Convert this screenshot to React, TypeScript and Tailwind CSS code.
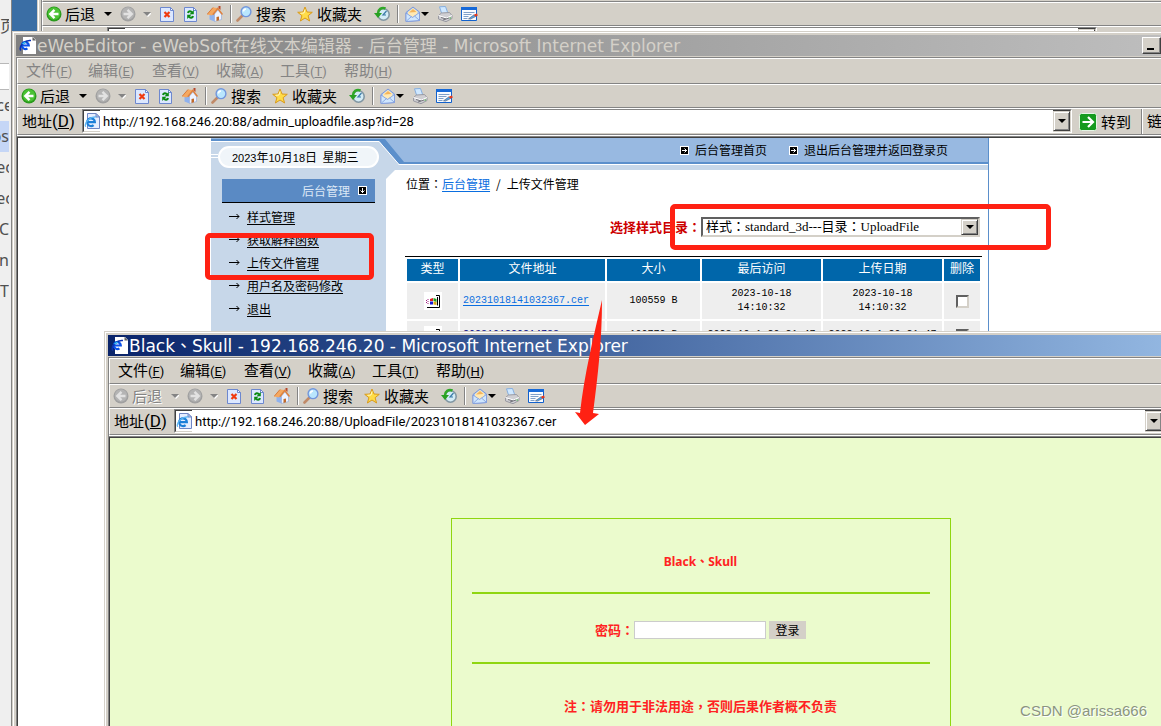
import { useId, type ReactNode } from "react";
import clsx from "clsx";

const menus = [
  { label: "文件", key: "F" },
  { label: "编辑", key: "E" },
  { label: "查看", key: "V" },
  { label: "收藏", key: "A" },
  { label: "工具", key: "T" },
  { label: "帮助", key: "H" },
];

const sideLinks = ["样式管理", "获取解释函数", "上传文件管理", "用户名及密码修改", "退出"];

const files = [
  {
    name: "20231018141032367.cer",
    size: "100559 B",
    visited: ["2023-10-18", "14:10:32"],
    uploaded: ["2023-10-18", "14:10:32"],
  },
  {
    name: "2023101820214733",
    size: "100770 B",
    visited: ["2023-10-1 20:21:47"],
    uploaded: ["2023-10-1 20:21:47"],
  },
];

// full-width punctuation, centred in its cell
function Mark({ children }: { children: ReactNode }) {
  return <span className="font-['Noto_Sans_CJK_TC',sans-serif]">{children}</span>;
}

function PageIcon() {
  return (
    <svg className="h-4 w-4 shrink-0" viewBox="0 0 16 16" aria-hidden="true">
      <path d="M3.500.5h8.500l3.500 3.500v11.500h-12z" fill="#e6eeff" stroke="#6f86c4" />
      <path d="M12 .5v3.500h3.500z" fill="#b9c8ea" stroke="#6f86c4" />
      <path d="M3.200 9.200h7.700a3.900 3.900 0 1 0-1.300 2.900" fill="none" stroke="#1c7fd8" strokeWidth="2.200" />
      <path d="M1.800 13.800C-.5 10 6 3.500 12.500 4" fill="none" stroke="#5ab4f2" strokeWidth="1.200" />
    </svg>
  );
}

function TitleIcon() {
  return (
    <svg className="h-[17px] w-[17px] shrink-0" viewBox="0 0 17 17" aria-hidden="true">
      <path d="M4 0h10l3 3v14H4z" fill="#fff" />
      <path d="M13.500 0v3.500H17z" fill="#606060" />
      <path d="M3 8.500h6.800a3.500 3.500 0 1 0-1.400 2.900" fill="none" stroke="#0a50e8" strokeWidth="2.200" />
      <path d="M1.800 13.500C-.5 9.500 6 2.500 12 3.500" fill="none" stroke="#0a30b0" strokeWidth="1.500" />
      <path d="M3.500 7l3-2" stroke="#38d0f8" strokeWidth="1.500" />
    </svg>
  );
}

function RoundArrow({ back, active }: { back?: boolean; active?: boolean }) {
  return (
    <svg className="h-4 w-4 shrink-0" viewBox="0 0 16 16" aria-hidden="true">
      <circle cx="8" cy="8" r="7.500" fill={active ? "#2a9a1c" : "#a0a0a0"} />
      <circle cx="8" cy="7.500" r="6.200" fill={active ? "#4cc234" : "#b4b4b4"} />
      <path
        d={back ? "M12.500 8H4.500M8.500 3.800L4.300 8l4.200 4.200" : "M3.500 8h8M7.500 3.800L11.700 8l-4.200 4.200"}
        fill="none"
        stroke={active ? "#fff" : "#e2e2e2"}
        strokeWidth="2.400"
      />
    </svg>
  );
}

function Caret({ muted }: { muted?: boolean }) {
  return (
    <svg className="h-2 w-2 shrink-0" viewBox="0 0 8 8" aria-hidden="true">
      {muted && <path d="M1 3h8L5 7z" fill="#fff" />}
      <path d="M0 2h8L4 6z" fill={muted ? "#848484" : "#000"} />
    </svg>
  );
}

function StopIcon() {
  return (
    <svg className="h-4 w-4" viewBox="0 0 16 16" aria-hidden="true">
      <path d="M1.500 1.500h10l3 3v11h-13z" fill="#dce8ff" stroke="#6d88cf" />
      <path d="M11.500 1.500v3h3z" fill="#fff" stroke="#6d88cf" />
      <path d="M5.500 6l5 5M10.500 6l-5 5" stroke="#f03a10" strokeWidth="2.200" />
    </svg>
  );
}

function RefreshIcon() {
  return (
    <svg className="h-4 w-4" viewBox="0 0 16 16" aria-hidden="true">
      <path d="M1.500 1.500h9l3 3v11h-12z" fill="#dce8ff" stroke="#6d88cf" />
      <path d="M10.500 1.500v3h3z" fill="#fff" stroke="#6d88cf" />
      <path d="M5 7c.3-2 3-2.300 4-.5M10 10c-.3 2-3 2.300-4 .5" fill="none" stroke="#0a8a12" strokeWidth="2" />
      <path d="M10.800 4v4.200H6.600zM4.200 13V8.800h4.200z" fill="#0a8a12" />
    </svg>
  );
}

function HomeIcon() {
  return (
    <svg className="h-4 w-4" viewBox="0 0 16 16" aria-hidden="true">
      <path d="M2.500 8v5.500l5 2V6z" fill="#8fb2ee" />
      <path d="M7.500 15.500V8L11 4l3.500 4.500v5z" fill="#eef3ff" stroke="#8ba5d8" strokeWidth=".6" />
      <path d="M9.500 15v-4l2.500-.5v3.700z" fill="#c06a2a" />
      <path d="M0 8.500L6 1.500l4.500.5-5.500 7.500z" fill="#f5a860" />
      <path d="M0 8.500L6 1.500" stroke="#d87a3a" />
      <path d="M5.800 8.800L10.800 2.500 15.500 8.500" fill="none" stroke="#e0813c" strokeWidth="1.400" />
      <path d="M11.500 0h2v4l-2-2z" fill="#b8482a" />
    </svg>
  );
}

function SearchIcon() {
  return (
    <svg className="h-4 w-4" viewBox="0 0 16 16" aria-hidden="true">
      <path d="M6.500 9.500L1.500 14.500" stroke="#c08a68" strokeWidth="2.600" strokeLinecap="round" />
      <circle cx="10" cy="5.700" r="4.900" fill="#b9e6fd" stroke="#7296dc" strokeWidth="1.400" />
      <path d="M7.500 5.500c0-1.500 1-2.500 2.500-2.500" fill="none" stroke="#fff" strokeWidth="1.600" />
    </svg>
  );
}

function StarIcon() {
  return (
    <svg className="h-4 w-4" viewBox="0 0 16 16" aria-hidden="true">
      <path
        d="M8 1l2 5 5.300.3-4.200 3.400 1.500 5.300L8 12l-4.600 3 1.500-5.300L.7 6.300 6 6z"
        fill="#ffdc48"
        stroke="#d99a1c"
      />
      <path d="M8 3.500L7 7l-3.500.3" fill="none" stroke="#fff8c0" />
    </svg>
  );
}

function HistoryIcon() {
  return (
    <svg className="h-4 w-4" viewBox="0 0 16 16" aria-hidden="true">
      <circle cx="9.500" cy="8.500" r="5.700" fill="#d4ecf6" stroke="#8297a3" strokeWidth="1.600" />
      <path d="M12.500 5L9 9h3" fill="none" stroke="#3b7ba8" strokeWidth="1.200" />
      <path d="M11.500 2.500C7.500.8 4 3.500 4 7.500" fill="none" stroke="#30a828" strokeWidth="2.600" />
      <path d="M0 7h8L4 12z" fill="#28a022" />
    </svg>
  );
}

function MailIcon() {
  return (
    <svg className="h-4 w-4" viewBox="0 0 16 16" aria-hidden="true">
      <path d="M1 6.500L8 1l6.500 5v8.500L1 15.500z" fill="#a9c8f4" stroke="#7c98da" />
      <path d="M3 6l5-4 4.500 3.500V9L8 11 3 9z" fill="#ffe9b4" />
      <path d="M4 6.500l4-3.500 3.500 3z" fill="#f4b45c" />
      <path d="M1 7l6.500 4.500 7-5V14.500L1 15.500z" fill="#cfe6fe" stroke="#7c98da" strokeWidth=".8" />
      <path d="M1.500 15l5-4.500M14 14l-4.500-4" stroke="#8aaae2" />
    </svg>
  );
}

function PrintIcon() {
  return (
    <svg className="h-4 w-4" viewBox="0 0 16 16" aria-hidden="true">
      <path d="M2.500.8l6-.3 2.500 7-6 1z" fill="#cfe8ff" stroke="#86aede" />
      <path d="M1.500 9.500L4.500 7l8-.5 2.500 3v3l-6 3.200-7.500-2.700z" fill="#cfcfd3" stroke="#9a9aa2" />
      <path d="M1.500 9.500l8 2.500 5.500-2.500" fill="none" stroke="#fff" />
      <path d="M4 11.500l5 1.500M6 14l6-2" stroke="#77777f" />
      <path d="M12.500 12H14" stroke="#3db23d" />
    </svg>
  );
}

function EditIcon() {
  return (
    <svg className="h-4 w-[18px]" viewBox="0 0 18 16" aria-hidden="true">
      <path d="M.5 1.500h15v13H.5z" fill="#f8fbff" stroke="#1261cc" />
      <path d="M0 1h16v3H0z" fill="#1669d8" />
      <path d="M2.500 6.500h11M2.500 8.500h8M2.500 10.500h5M2.500 12.500h4" stroke="#7f9fc8" />
      <path d="M7.500 12.800l5.500-4 1.500 1.800-5 2.500z" fill="#4fa6ee" stroke="#556" strokeWidth=".6" />
      <path d="M13 8.500l3-1 .8 2-2.500 1.300z" fill="#e2391d" />
    </svg>
  );
}

function Divider({ className }: { className?: string }) {
  return <div className={clsx("h-[18px] w-0.5 shrink-0 border-l border-r border-l-[#848484] border-r-white", className)} />;
}

function ToolButton({
  className,
  children,
  label,
  disabled,
}: {
  className?: string;
  children: ReactNode;
  label: string;
  disabled?: boolean;
}) {
  return (
    <button
      type="button"
      aria-label={label}
      disabled={disabled}
      className={clsx("flex shrink-0 items-center whitespace-nowrap", className)}
    >
      {children}
    </button>
  );
}

function Toolbar({ canGoBack }: { canGoBack: boolean }) {
  return (
    <div className="flex h-6 items-center border-t border-b border-l border-t-white border-b-[#848484] border-l-white pl-[3px] text-[15px] leading-5">
      <ToolButton label="后退" disabled={!canGoBack} className="gap-[3px]">
        <RoundArrow back active={canGoBack} />
        <span className={canGoBack ? "" : "text-[#848484] [text-shadow:1px_1px_#fff]"}>后退</span>
      </ToolButton>
      <ToolButton label="后退列表" className="ml-[9px]">
        <Caret muted={!canGoBack} />
      </ToolButton>
      <ToolButton label="前进" disabled className="ml-2">
        <RoundArrow />
      </ToolButton>
      <ToolButton label="前进列表" className="ml-[7px]">
        <Caret muted />
      </ToolButton>
      <ToolButton label="停止" className="ml-2">
        <StopIcon />
      </ToolButton>
      <ToolButton label="刷新" className="ml-2">
        <RefreshIcon />
      </ToolButton>
      <ToolButton label="主页" className="ml-2">
        <HomeIcon />
      </ToolButton>
      <Divider className="ml-[7px]" />
      <ToolButton label="搜索" className="ml-1 gap-1">
        <SearchIcon />
        搜索
      </ToolButton>
      <ToolButton label="收藏夹" className="ml-[11px] gap-1">
        <StarIcon />
        收藏夹
      </ToolButton>
      <ToolButton label="历史" className="ml-3">
        <HistoryIcon />
      </ToolButton>
      <Divider className="ml-[7px]" />
      <ToolButton label="邮件" className="ml-1.5">
        <MailIcon />
        <Caret />
      </ToolButton>
      <ToolButton label="打印" className="ml-2">
        <PrintIcon />
      </ToolButton>
      <ToolButton label="编辑" className="ml-2">
        <EditIcon />
      </ToolButton>
    </div>
  );
}

function DropButton({ label }: { label: string }) {
  return (
    <button
      type="button"
      aria-label={label}
      className="flex w-[17px] shrink-0 items-center justify-center self-stretch border border-t-[#d4d0c8] border-r-[#404040] border-b-[#404040] border-l-[#d4d0c8] bg-[#d4d0c8] shadow-[inset_1px_1px_#fff,inset_-1px_-1px_#848484]"
    >
      <Caret />
    </button>
  );
}

function AddressBar({ url }: { url: string }) {
  const id = useId();
  return (
    <div className="flex h-[27px] border-t border-b border-l border-t-white border-b-[#848484] border-l-white">
      <label htmlFor={id} className="w-16 shrink-0 pl-1 text-[15px] leading-6 whitespace-nowrap">
        地址<span className="font-['Roboto',sans-serif] text-[17px]">(<u>D</u>)</span>
      </label>
      <div className="flex h-6 min-w-0 flex-1 border border-t-[#848484] border-r-white border-b-white border-l-[#848484]">
        <div className="flex min-w-0 flex-1 items-center border border-t-[#404040] border-r-[#d4d0c8] border-b-[#d4d0c8] border-l-[#404040] bg-white">
          <PageIcon />
          <input
            id={id}
            defaultValue={url}
            className="min-w-0 flex-1 bg-white pt-0.5 pl-[3px] font-['Roboto',sans-serif] text-[13px] leading-5 outline-none"
          />
          <DropButton label="地址列表" />
        </div>
      </div>
      <div className="flex w-[70px] shrink-0 items-center border-r border-[#848484] pl-[7px]">
        <button type="button" className="flex items-center gap-1 text-[15px] leading-5">
          <svg className="h-[18px] w-[18px]" viewBox="0 0 18 18" aria-hidden="true">
            <rect x=".5" y=".5" width="17" height="17" rx="2" fill="#159a1e" stroke="#e4f4e4" />
            <path d="M3.500 9h10M9 4l5 5-5 5" fill="none" stroke="#fff" strokeWidth="2.200" />
          </svg>
          转到
        </button>
      </div>
      <div className="w-[63px] shrink-0 border-l border-white pl-1 text-[15px] leading-6">链接</div>
    </div>
  );
}

function BrowserWindow({
  title,
  url,
  active = false,
  canGoBack = true,
  className,
  children,
}: {
  title: ReactNode;
  url: string;
  active?: boolean;
  canGoBack?: boolean;
  className: string;
  children?: ReactNode;
}) {
  return (
    <section className={clsx("absolute bottom-[-40px] border border-[#d4d0c8]", className)}>
      <div className="flex h-full flex-col border border-white bg-[#d4d0c8] p-0.5">
        <header
          className={clsx(
            "flex h-[21px] shrink-0 items-center bg-linear-to-r pl-[3px] font-['DejaVu_Sans','Noto_Sans_CJK_SC',sans-serif] text-[17px] leading-5 whitespace-nowrap",
            active ? "from-[#0a246a] to-[#a6caf0] text-white" : "from-[#808080] to-[#c0c0c0] text-[#d4d0c8]",
          )}
        >
          <TitleIcon />
          <h1 className="ml-px">{title}</h1>
          <div className="ml-auto flex pr-1.5">
            {["最小化", "最大化", "关闭"].map((name) => (
              <button
                key={name}
                type="button"
                aria-label={name}
                className="flex h-[17px] w-[19px] items-end border border-t-white border-r-[#404040] border-b-[#404040] border-l-white bg-[#d4d0c8] pb-[3px] pl-1 shadow-[inset_-1px_-1px_#848484]"
              >
                <span className="h-0.5 w-[7px] bg-black" />
              </button>
            ))}
          </div>
        </header>
        <div className="mt-px flex min-h-0 flex-1 flex-col border-t border-l border-[#848484]">
          <nav
            className={clsx(
              "flex h-[26px] shrink-0 items-center border-t border-b border-l border-t-white border-b-[#848484] border-l-white pl-1.5 text-[15px] leading-5",
              active ? "text-black" : "text-[#848484]",
            )}
          >
            {menus.map((m) => (
              <button key={m.key} type="button" className="w-16 text-left whitespace-nowrap first:pl-0.5">
                {m.label}
                <span className="font-['Roboto',sans-serif] text-[13px]">
                  (<u>{m.key}</u>)
                </span>
              </button>
            ))}
          </nav>
          <Toolbar canGoBack={canGoBack} />
          <AddressBar url={url} />
          <div className="min-h-0 flex-1 border-t border-white">
            <div className="h-full border-t border-[#848484]">
              <div className="h-full border-t border-l border-[#404040] bg-white">{children}</div>
            </div>
          </div>
        </div>
      </div>
    </section>
  );
}

function SmallArrow({ down }: { down?: boolean }) {
  return (
    <svg className="h-[9px] w-[9px] shrink-0" viewBox="0 0 9 9" aria-hidden="true">
      <rect x=".5" y=".5" width="8" height="8" fill="#000" stroke="#fff" />
      <path d={down ? "M4.500 2v5M2.500 4.500l2 2 2-2" : "M2 4.500h5M4.500 2.500l2 2-2 2"} fill="none" stroke="#fff" />
    </svg>
  );
}

function Digits({ children }: { children: ReactNode }) {
  return <span className="font-['Liberation_Sans',sans-serif] text-[11px]">{children}</span>;
}

function Sidebar() {
  return (
    <aside className="w-[175px] shrink-0 bg-[#c7d7e9]">
      <div className="flex pt-2">
        <div className="mt-2 h-1 w-[7px] border-t border-b border-white" />
        <div className="h-[22px] w-[161px] rounded-full border-2 border-white bg-[#f0f5f9] pl-3 text-[12px] leading-[18px] whitespace-nowrap">
          <Digits>2023</Digits>年<Digits>10</Digits>月<Digits>18</Digits>日&nbsp; 星期三
        </div>
      </div>
      <div className="mt-[11px] mr-[11px] ml-[11px] flex h-6 items-center justify-end gap-2 border-b border-black bg-[#5a8ac4] pr-2 text-[12px] leading-4 text-[#dce8f6]">
        后台管理
        <SmallArrow down />
      </div>
      <ul className="mt-0.5 text-[12px] leading-[23px]">
        {sideLinks.map((text) => (
          <li key={text} className="flex items-center gap-[7px] pl-[18px] whitespace-nowrap">
            <svg className="h-[7px] w-[11px]" viewBox="0 0 11 7" aria-hidden="true">
              <path d="M0 3.500h10M7.500 1l2.500 2.500L7.500 6" fill="none" stroke="#000" />
            </svg>
            <a href="#" className="underline underline-offset-2">
              {text}
            </a>
          </li>
        ))}
      </ul>
    </aside>
  );
}

function FileTable() {
  const head = ["类型", "文件地址", "大小", "最后访问", "上传日期", "删除"];
  return (
    <table className="w-[577px] table-fixed border-separate border-spacing-0.5 border-t border-black text-center">
      <colgroup>
        <col className="w-[51px]" />
        <col className="w-[145px]" />
        <col className="w-[93px]" />
        <col className="w-[119px]" />
        <col className="w-[119px]" />
        <col />
      </colgroup>
      <thead>
        <tr className="h-[22px] bg-[#0066aa] text-[12px] leading-[18px] text-white">
          {head.map((h) => (
            <th key={h} className="p-0 pb-1 font-normal">
              {h}
            </th>
          ))}
        </tr>
      </thead>
      <tbody className="font-['Liberation_Mono',monospace] text-[10px] leading-[14px]">
        {files.map((f, i) => (
          <tr key={f.name} className={clsx("bg-[#eeeeee]", i === 0 ? "h-9" : "h-7")}>
            <td className="p-0">
              <svg className="mx-auto h-[18px] w-[18px]" viewBox="0 0 18 18" aria-hidden="true">
                <path d="M0 0h18v18H0z" fill="#fff" />
                <path d="M12 3.500h3.500v12H3M13.500 5v8.500" fill="none" stroke="#000" />
                <path d="M6 7l3-1v3H6z" fill="#e02020" />
                <path d="M9.500 6l3 1v3l-3-1z" fill="#20a020" />
                <path d="M6 9.500h3v3H6z" fill="#1818d0" />
                <path d="M9.500 9.500l3 .5v3l-3-.5z" fill="#d8a818" />
                <path d="M4 7v5M2.500 8v3" stroke="#a02080" strokeDasharray="1 1" />
              </svg>
            </td>
            <td className="p-0 pl-[3px] text-left">
              <a href="#" className={clsx("underline underline-offset-2", i === 0 ? "text-[#0a6ee0]" : "text-[#000080]")}>
                {f.name}
              </a>
            </td>
            <td className="p-0">{f.size}</td>
            <td className="p-0">
              {f.visited.map((line) => (
                <div key={line}>{line}</div>
              ))}
            </td>
            <td className="p-0">
              {f.uploaded.map((line) => (
                <div key={line}>{line}</div>
              ))}
            </td>
            <td className="p-0">
              <input
                type="checkbox"
                aria-label={`删除 ${f.name}`}
                className="mx-auto block h-[13px] w-[13px] appearance-none border-2 border-t-[#606060] border-r-[#d4d0c8] border-b-[#d4d0c8] border-l-[#606060] bg-white"
              />
            </td>
          </tr>
        ))}
      </tbody>
    </table>
  );
}

function AdminPage() {
  return (
    <div className="relative ml-[193px] flex w-[778px] border-r border-[#5b8fcb] text-[12px]">
      <Sidebar />
      <main className="min-w-0 flex-1">
        <div className="border-b-2 border-[#5b8fcb] bg-[#98b9e1]">
          <div className="flex h-6 items-center justify-end gap-[22px] pr-10 whitespace-nowrap">
            <a href="#" className="flex items-center gap-1.5">
              <SmallArrow />
              后台管理首页
            </a>
            <a href="#" className="flex items-center gap-1.5">
              <SmallArrow />
              退出后台管理并返回登录页
            </a>
          </div>
        </div>
        <div className="h-1.5 border-t border-white bg-[#c7d7e9]" />
        <div className="pr-1.5 pl-[19px]">
          <p className="mt-1 ml-px leading-5">
            位置<Mark>：</Mark>
            <a href="#" className="text-[#0a6ee0] underline underline-offset-2">
              后台管理
            </a>
            <span className="mx-1.5">/</span>上传文件管理
          </p>
          <div className="mt-[23px] mb-[19px] flex items-center justify-end pr-0.5">
            <label htmlFor="style-dir" className="text-[13px] leading-5 font-bold text-[#cc0000]">
              选择样式目录<Mark>：</Mark>
            </label>
            <div className="flex h-5 w-[279px] border-2 border-t-[#606060] border-r-[#d4d0c8] border-b-[#d4d0c8] border-l-[#606060] bg-white">
              <select
                id="style-dir"
                className="min-w-0 flex-1 appearance-none pl-[3px] font-['Liberation_Serif','Noto_Sans_CJK_TC',serif] text-[13px] leading-4 outline-none"
              >
                <option>样式：standard_3d---目录：UploadFile</option>
              </select>
              <DropButton label="展开" />
            </div>
          </div>
          <FileTable />
        </div>
      </main>
      {/* slanted edge between sidebar and header, and the content corner */}
      <svg className="absolute top-0 left-0 h-11 w-[200px]" viewBox="0 0 200 44" aria-hidden="true">
        <path d="M168 0H200V26H168z" fill="#98b9e1" />
        <path d="M168 1h6l19 23h7v2H188L168 3z" fill="#5b8fcb" />
        <path d="M168 3l20 24h12v5H168z" fill="#c7d7e9" />
        <path d="M0 0h170v1H0z" fill="#98b9e1" />
        <path d="M0 1h170v2H0z" fill="#5b8fcb" />
        <path d="M0 3.500h168l20 23h12" fill="none" stroke="#fff" />
        <path d="M175 32h9l-9 9z" fill="#c7d7e9" />
      </svg>
    </div>
  );
}

function LoginPage() {
  return (
    <div className="h-full bg-[#ebfbcd] pt-20 pr-1.5 text-[13px] font-bold text-[#ff2222]">
      <form className="mx-auto h-full w-[500px] border border-[#8fd610] px-5 text-center leading-5">
        <p className="pt-8 pb-5 font-['Noto_Sans',sans-serif] text-[12px]">
          Black<Mark>、</Mark>Skull
        </p>
        <div className="flex items-center justify-center border-t-2 border-b-2 border-[#8fd610] pt-[26px] pb-[22px]">
          <label htmlFor="password">
            密码<Mark>：</Mark>
          </label>
          <input id="password" type="password" className="h-[18px] w-[132px] border border-[#cccccc] bg-white" />
          <button
            type="button"
            className="ml-[3px] h-[18px] w-[37px] bg-[#d4d0c8] text-[12px] leading-4 font-normal text-black"
          >
            登录
          </button>
        </div>
        <p className="pt-8 whitespace-nowrap">
          注<Mark>：</Mark>请勿用于非法用途<Mark>，</Mark>否则后果作者概不负责
        </p>
      </form>
    </div>
  );
}

function FileStrip() {
  return (
    <div className="absolute inset-y-0 left-0 flex w-3 border-r border-[#848484] bg-[#efefef]">
      <div className="flex w-[9px] flex-col items-end overflow-hidden font-['Noto_Sans','Noto_Sans_CJK_SC',sans-serif] text-[16px] leading-[31px] whitespace-nowrap text-[#505050]">
        <div className="h-[63px] w-full overflow-hidden pt-3 leading-7">页</div>
        <div className="h-[27px] w-full border-y border-[#b8b8b8] bg-white" />
        <div className="-mr-1">ce</div>
        <div className="bg-[#c5d6f6]">ps</div>
        <div className="-mr-1">ec</div>
        <div className="-mr-1">ec</div>
        <div>C</div>
        <div>n</div>
        <div>IT</div>
      </div>
    </div>
  );
}

export default function App() {
  return (
    <div className="relative h-screen overflow-hidden bg-[#3a6ea5] font-['Noto_Sans_CJK_SC',sans-serif] text-black">
      <FileStrip />
      <BrowserWindow title="Microsoft Internet Explorer" url="" className="top-[-51px] -right-[73px] left-[37px]" />
      <BrowserWindow
        title="eWebEditor - eWebSoft在线文本编辑器 - 后台管理 - Microsoft Internet Explorer"
        url="http://192.168.246.20:88/admin_uploadfile.asp?id=28"
        className="top-[31px] -right-12 left-3"
      >
        <AdminPage />
      </BrowserWindow>
      <BrowserWindow
        active
        canGoBack={false}
        title={
          <>
            Black<Mark>、</Mark>Skull - 192.168.246.20 - Microsoft Internet Explorer
          </>
        }
        url="http://192.168.246.20:88/UploadFile/20231018141032367.cer"
        className="top-[331px] -right-[140px] left-[104px]"
      >
        <LoginPage />
      </BrowserWindow>

      {/* red annotations drawn over the windows */}
      <div className="pointer-events-none absolute top-[233px] left-[205px] h-[47px] w-[169px] rounded-[5px] border-[5px] border-[#ff2113]" />
      <div className="pointer-events-none absolute top-[204px] left-[670px] h-[46px] w-[381px] rounded-[5px] border-[5px] border-[#ff2113]" />
      <svg
        className="pointer-events-none absolute top-[300px] left-[575px] h-[126px] w-7"
        viewBox="0 0 28 126"
        aria-hidden="true"
      >
        <path d="M27 0C19 35 9 75 5 113l-5-1 10 13 14-11-6-1C23 75 27 40 27 0z" fill="#ff2113" />
      </svg>
      <p className="absolute right-[14px] bottom-1 font-['Liberation_Sans',sans-serif] text-[15px] leading-[22px] text-[#8a9580] [text-shadow:1px_1px_#fff]">
        CSDN @arissa666
      </p>
    </div>
  );
}
